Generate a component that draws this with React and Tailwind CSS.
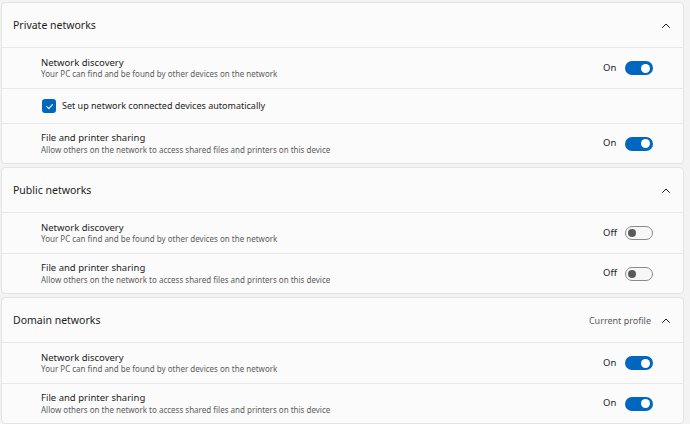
import React from 'react';

const font = { fontFamily: '"Noto Sans", "Open Sans", sans-serif' };

const Chevron = () => (
  <svg width="10" height="10" viewBox="0 0 10 10" className="text-[#1b1b1b]">
    <path d="M1.5 6.5 L5 3 L8.5 6.5" fill="none" stroke="currentColor" strokeWidth="1" strokeLinecap="round" strokeLinejoin="round" />
  </svg>
);

const Toggle = ({ on }) =>
  on ? (
    <div className="w-[28px] h-[14px] rounded-full bg-[#0067c0] flex items-center justify-end pr-[3px]">
      <div className="w-[9px] h-[9px] rounded-full bg-white"></div>
    </div>
  ) : (
    <div className="w-[28px] h-[14px] rounded-full border border-[#8a8a8a] bg-[#f7f7f7] flex items-center pl-[2px]">
      <div className="w-[8px] h-[8px] rounded-full bg-[#5a5a5a]"></div>
    </div>
  );

const Row = ({ title, sub, on, last }) => (
  <div className={`flex items-center pl-[39px] pr-[30px] ${last ? 'h-[39px]' : 'h-[41px] border-b border-[#e8e8e8]'}`}>
    <div className="flex-1 flex flex-col leading-none">
      <span className="text-[9.5px] text-[#1b1b1b]">{title}</span>
      <span className="text-[8px] text-[#5c5c5c] mt-[3px]">{sub}</span>
    </div>
    <span className="text-[9.5px] text-[#1b1b1b] w-[22px]">{on ? 'On' : 'Off'}</span>
    <Toggle on={on} />
  </div>
);

const Card = ({ title, extra, children }) => (
  <div className="bg-[#fbfbfb] border border-[#e3e3e3] rounded-[4px]">
    <div className="flex items-center h-[45px] pl-[11px] pr-[12px] pt-[1px] border-b border-[#e8e8e8]">
      <span className="flex-1 text-[10.5px] text-[#1b1b1b]">{title}</span>
      {extra && <span className="text-[9px] text-[#5c5c5c] mr-[10px]">{extra}</span>}
      <Chevron />
    </div>
    {children}
  </div>
);

const discSub = 'Your PC can find and be found by other devices on the network';
const shareSub = 'Allow others on the network to access shared files and printers on this device';

export default function App() {
  return (
    <div className="w-[690px] h-[424px] bg-[#f3f3f3] pt-[2px] pl-[1px] pr-[6px] flex flex-col gap-[3px] overflow-hidden" style={font}>
      <Card title="Private networks">
        <Row title="Network discovery" sub={discSub} on />
        <div className="flex items-center h-[35px] pl-[40px] border-b border-[#e8e8e8]">
          <div className="w-[14px] h-[14px] rounded-[3px] bg-[#0067c0] flex items-center justify-center">
            <svg width="9" height="9" viewBox="0 0 10 10">
              <path d="M2 5.2 L4.2 7.3 L8.2 2.8" fill="none" stroke="white" strokeWidth="1.2" strokeLinecap="round" strokeLinejoin="round" />
            </svg>
          </div>
          <span className="ml-[6px] text-[9px] text-[#1b1b1b]">Set up network connected devices automatically</span>
        </div>
        <Row title="File and printer sharing" sub={shareSub} on last />
      </Card>
      <Card title="Public networks">
        <Row title="Network discovery" sub={discSub} on={false} />
        <Row title="File and printer sharing" sub={shareSub} on={false} last />
      </Card>
      <Card title="Domain networks" extra="Current profile">
        <Row title="Network discovery" sub={discSub} on />
        <Row title="File and printer sharing" sub={shareSub} on last />
      </Card>
    </div>
  );
}
